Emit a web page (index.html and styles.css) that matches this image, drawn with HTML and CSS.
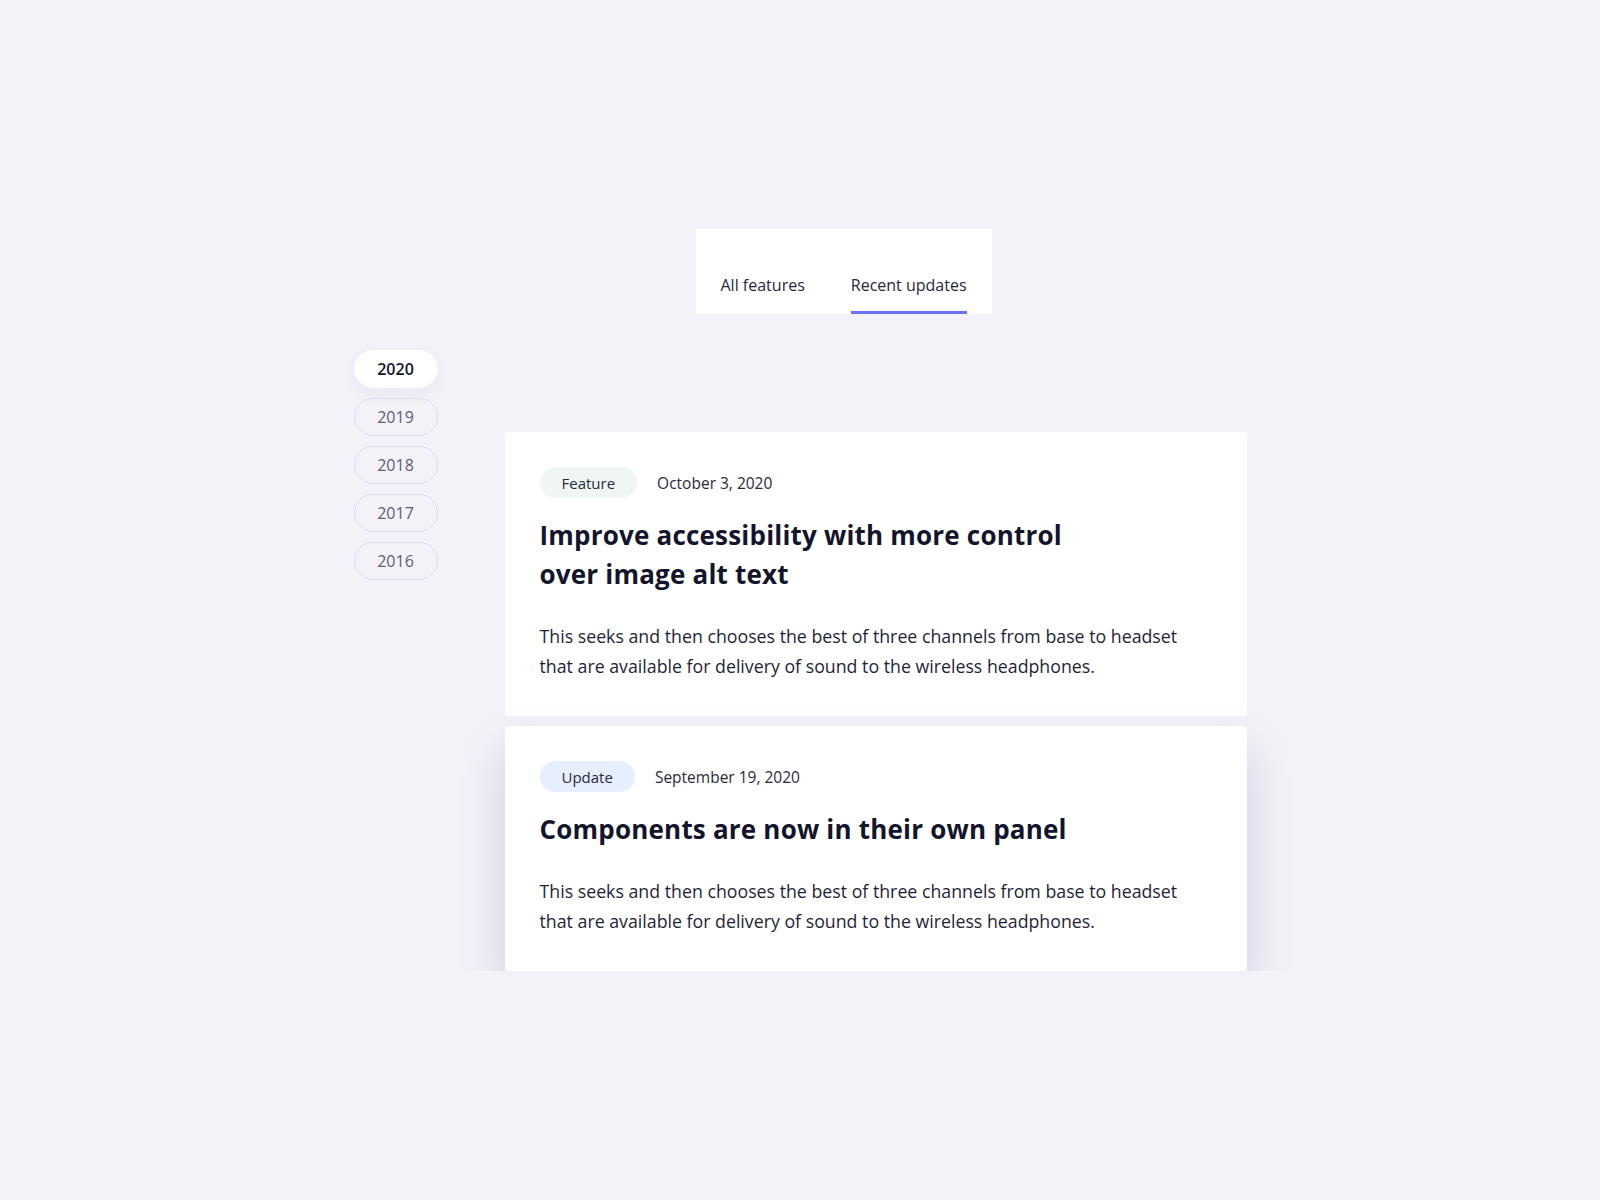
FILE: index.html
```html
<!DOCTYPE html>
<html lang="en">

<head>
    <meta charset="UTF-8">
    <meta name="viewport" content="width=device-width, initial-scale=1.0">
    <title>Changelog</title>
    <link rel="stylesheet" href="styles.css">
</head>

<body>
    <div class="page">
        <div class="tabs-row">
            <nav class="tabs">
                <a class="tab" href="#">All features</a>
                <a class="tab tab-active" href="#">Recent updates</a>
            </nav>
        </div>

        <div class="layout">
            <aside class="years">
                <button class="year year-active">2020</button>
                <button class="year">2019</button>
                <button class="year">2018</button>
                <button class="year">2017</button>
                <button class="year">2016</button>
            </aside>

            <main class="feed">
                <article class="card">
                    <div class="meta">
                        <span class="badge badge-feature">Feature</span>
                        <span class="date">October 3, 2020</span>
                    </div>
                    <h2 class="card-title">Improve accessibility with more control over image alt text</h2>
                    <p class="card-text">This seeks and then chooses the best of three channels from base to headset
                        that are available for delivery of sound to the wireless headphones.</p>
                </article>

                <article class="card card-raised">
                    <div class="meta">
                        <span class="badge badge-update">Update</span>
                        <span class="date">September 19, 2020</span>
                    </div>
                    <h2 class="card-title">Components are now in their own panel</h2>
                    <p class="card-text">This seeks and then chooses the best of three channels from base to headset
                        that are available for delivery of sound to the wireless headphones.</p>
                </article>
            </main>
        </div>
    </div>
</body>

</html>
```

FILE: styles.css
```css
body {
    margin: 0;
    background-color: #f3f2f8;
    font-family: "Open Sans", "Noto Sans", sans-serif;
    color: #15152e;
}

.page {
    width: 893px;
    margin: 0 auto;
    padding-top: 229px;
}

.tabs-row {
    display: flex;
    padding-left: 342px;
}

.tabs {
    display: flex;
    align-items: flex-end;
    gap: 46px;
    height: 85px;
    padding: 0 25px;
    background-color: #fff;
    box-sizing: border-box;
}

.tab {
    display: block;
    padding-bottom: 16px;
    border-bottom: 3px solid transparent;
    font-size: 16px;
    line-height: 20px;
    color: #26263f;
    text-decoration: none;
}

.tab-active {
    border-bottom-color: #6c72f3;
}

.layout {
    display: flex;
    margin-top: 36px;
}

.years {
    display: flex;
    flex-direction: column;
    gap: 10px;
    width: 151px;
    flex-shrink: 0;
}

.year {
    width: 84px;
    height: 38px;
    padding: 0;
    border: 1px solid #dcdaf5;
    border-radius: 19px;
    background: transparent;
    font-family: inherit;
    font-size: 16px;
    color: #5d5c74;
    cursor: pointer;
}

.year-active {
    background-color: #fff;
    border-color: #fff;
    color: #14142b;
    font-weight: 600;
    box-shadow: 0 6px 14px rgba(110, 105, 170, 0.08);
}

.feed {
    display: flex;
    flex-direction: column;
    gap: 10px;
    width: 742px;
    margin-top: 82px;
}

.card {
    background-color: #fff;
    border-radius: 3px;
    padding: 35px;
}

.card-raised {
    box-shadow: 0 24px 44px rgba(95, 90, 160, 0.25);
}

.meta {
    display: flex;
    align-items: center;
    gap: 20px;
    height: 31px;
}

.badge {
    display: inline-flex;
    align-items: center;
    height: 31px;
    padding: 0 22px;
    border-radius: 16px;
    font-size: 15px;
    color: #2a2a40;
}

.badge-feature {
    background-color: #eff6f3;
}

.badge-update {
    background-color: #e7eefd;
}

.date {
    font-size: 15.5px;
    color: #2a2a40;
}

.card-title {
    max-width: 560px;
    margin: 18px 0 0;
    font-size: 26px;
    line-height: 39px;
    font-weight: 700;
    letter-spacing: 0.2px;
    color: #14142b;
}

.card-text {
    max-width: 650px;
    margin: 28px 0 0;
    font-size: 17.75px;
    line-height: 29.5px;
    color: #1f1f38;
}
```
